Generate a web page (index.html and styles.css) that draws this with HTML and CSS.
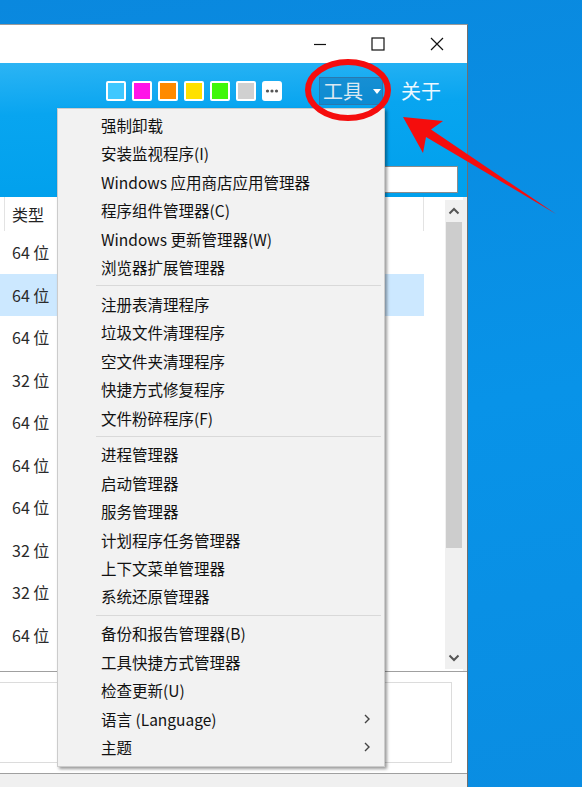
FILE: index.html
```html
<!DOCTYPE html>
<html lang="zh-CN">
<head>
    <meta charset="UTF-8">
    <title>工具菜单</title>
    <link rel="stylesheet" href="styles.css">
</head>
<body>
    <div class="window">
        <!-- 标题栏 -->
        <div class="titlebar">
            <div class="tbtn">
                <svg width="14" height="14" viewBox="0 0 14 14"><line x1="1" y1="7.5" x2="13" y2="7.5" stroke="#111" stroke-width="1.2"/></svg>
            </div>
            <div class="tbtn">
                <svg width="14" height="14" viewBox="0 0 14 14"><rect x="1" y="1" width="12" height="12" fill="none" stroke="#111" stroke-width="1.2"/></svg>
            </div>
            <div class="tbtn close">
                <svg width="14" height="14" viewBox="0 0 14 14"><path d="M1 1 L13 13 M13 1 L1 13" stroke="#111" stroke-width="1.2"/></svg>
            </div>
        </div>

        <!-- 蓝色头部 -->
        <div class="header">
            <div class="toolbar">
                <div class="swatches">
                    <span class="sw sw-blue"></span>
                    <span class="sw sw-pink"></span>
                    <span class="sw sw-orange"></span>
                    <span class="sw sw-yellow"></span>
                    <span class="sw sw-green"></span>
                    <span class="sw sw-gray"></span>
                    <span class="sw sw-more">
                        <svg width="16" height="16" viewBox="0 0 16 16">
                            <circle cx="3.5" cy="8" r="1.6" fill="#555"/>
                            <circle cx="8" cy="8" r="1.6" fill="#555"/>
                            <circle cx="12.5" cy="8" r="1.6" fill="#555"/>
                        </svg>
                    </span>
                </div>
                <div class="tool-btn">工具 <span class="caret"></span></div>
                <div class="about">关于</div>
            </div>
            <div class="search"></div>
        </div>

        <!-- 列表 -->
        <div class="list">
            <div class="table">
                <div class="thead"><span class="th">类型</span></div>
                <div class="row">64 位</div>
                <div class="row selected">64 位</div>
                <div class="row">64 位</div>
                <div class="row">32 位</div>
                <div class="row">64 位</div>
                <div class="row">64 位</div>
                <div class="row">64 位</div>
                <div class="row">32 位</div>
                <div class="row">32 位</div>
                <div class="row">64 位</div>
            </div>
            <div class="scrollbar">
                <div class="sb-arrow">
                    <svg width="12" height="8" viewBox="0 0 12 8"><polyline points="1.5,6.5 6,2 10.5,6.5" fill="none" stroke="#555" stroke-width="2"/></svg>
                </div>
                <div class="sb-thumb"></div>
                <div class="sb-track"></div>
                <div class="sb-arrow">
                    <svg width="12" height="8" viewBox="0 0 12 8"><polyline points="1.5,1.5 6,6 10.5,1.5" fill="none" stroke="#555" stroke-width="2"/></svg>
                </div>
            </div>
        </div>

        <!-- 详情 -->
        <div class="lower">
            <div class="details"></div>
        </div>
        <div class="status"></div>
    </div>

    <!-- 下拉菜单 -->
    <div class="menu">
        <div class="item">强制卸载</div>
        <div class="item">安装监视程序(I)</div>
        <div class="item">Windows 应用商店应用管理器</div>
        <div class="item">程序组件管理器(C)</div>
        <div class="item">Windows 更新管理器(W)</div>
        <div class="item">浏览器扩展管理器</div>
        <div class="sep"></div>
        <div class="item">注册表清理程序</div>
        <div class="item">垃圾文件清理程序</div>
        <div class="item">空文件夹清理程序</div>
        <div class="item">快捷方式修复程序</div>
        <div class="item">文件粉碎程序(F)</div>
        <div class="sep"></div>
        <div class="item">进程管理器</div>
        <div class="item">启动管理器</div>
        <div class="item">服务管理器</div>
        <div class="item">计划程序任务管理器</div>
        <div class="item">上下文菜单管理器</div>
        <div class="item">系统还原管理器</div>
        <div class="sep"></div>
        <div class="item">备份和报告管理器(B)</div>
        <div class="item">工具快捷方式管理器</div>
        <div class="item">检查更新(U)</div>
        <div class="item sub">语言 (Language)
            <svg width="6" height="10" viewBox="0 0 6 10"><polyline points="1,1 5,5 1,9" fill="none" stroke="#444" stroke-width="1.4"/></svg>
        </div>
        <div class="item sub">主题
            <svg width="6" height="10" viewBox="0 0 6 10"><polyline points="1,1 5,5 1,9" fill="none" stroke="#444" stroke-width="1.4"/></svg>
        </div>
    </div>

    <!-- 红色标注 -->
    <svg class="marks" width="582" height="787" viewBox="0 0 582 787">
        <ellipse cx="348" cy="90" rx="40" ry="28" fill="none" stroke="#f50d0d" stroke-width="6"/>
        <polygon points="403,117 443,121 431,129.5 556,214 426,137 423,153" fill="#f50d0d"/>
    </svg>
</body>
</html>
```

FILE: styles.css
```css
body {
    margin: 0;
    width: 582px;
    height: 787px;
    overflow: hidden;
    position: relative;
    font-family: "Noto Sans CJK SC", "Noto Sans", sans-serif;
    background: linear-gradient(170deg, #0a88de 0%, #0893e8 55%, #0a8de2 100%);
}
.window {
    width: 467px;
    height: 762px;
    margin-top: 24px;
    border-top: 1px solid #9a9a9a;
    border-right: 1px solid #707070;
    background: #fff;
    display: flex;
    flex-direction: column;
}
/* 标题栏 */
.titlebar {
    height: 38px;
    display: flex;
    justify-content: flex-end;
    align-items: center;
    background: #fff;
}
.tbtn {
    width: 58px;
    height: 38px;
    display: flex;
    align-items: center;
    justify-content: center;
}
.tbtn.close {
    width: 60px;
}
/* 头部 */
.header {
    height: 134px;
    display: flex;
    flex-direction: column;
    background: linear-gradient(178deg, #2cb4f4 0%, #08a5f0 35%, #00a0ec 100%);
}
.toolbar {
    display: flex;
    align-items: center;
    justify-content: flex-end;
    margin-top: 14px;
    padding-right: 26px;
    color: #fff;
}
.swatches {
    display: flex;
    gap: 6px;
    margin-right: 37px;
}
.sw {
    width: 16px;
    height: 16px;
    border: 2px solid #fff;
    border-radius: 2px;
    box-sizing: content-box;
}
.sw-blue { background: #3fc8ff; }
.sw-pink { background: #ff14e8; }
.sw-orange { background: #ff8a00; }
.sw-yellow { background: #ffe100; }
.sw-green { background: #3ff70a; }
.sw-gray { background: #d0d0d0; }
.sw-more {
    background: #fff;
    border-radius: 3px;
    display: flex;
}
.tool-btn {
    width: 64px;
    height: 28px;
    border: 1px solid #2a78ae;
    background: rgba(20, 100, 165, 0.4);
    font-size: 20px;
    line-height: 28px;
    padding-left: 3px;
    box-sizing: border-box;
    display: flex;
    align-items: center;
    gap: 10px;
    margin-right: 18px;
    color: #dce9f2;
}
.caret {
    width: 0;
    height: 0;
    border-left: 4px solid transparent;
    border-right: 4px solid transparent;
    border-top: 5px solid #fff;
}
.about {
    font-size: 20px;
    line-height: 28px;
    color: #eef8ff;
}
.search {
    margin-top: auto;
    margin-bottom: 4px;
    margin-left: 200px;
    margin-right: 9px;
    height: 25px;
    background: #fff;
    border: 1px solid #8c8c8c;
}
/* 列表 */
.list {
    height: 474px;
    display: flex;
    border-bottom: 1px solid #a0a0a0;
    padding-right: 4px;
    background: linear-gradient(to left, #f0f0f0 4px, #fff 4px);
}
.table {
    flex: 1;
}
.thead {
    height: 34px;
    width: 420px;
    margin-left: 4px;
    display: flex;
    align-items: center;
    box-sizing: border-box;
    border-left: 1px solid #e3e3e3;
    border-right: 1px solid #e3e3e3;
}
.th {
    font-size: 16px;
    color: #222;
    padding-left: 7px;
}
.row {
    width: 424px;
    height: 42.55px;
    line-height: 42.55px;
    padding-left: 12px;
    box-sizing: border-box;
    font-size: 16px;
    color: #2a2a2a;
}
.row.selected {
    background: #cce8ff;
}
.scrollbar {
    width: 18px;
    margin-top: 3px;
    margin-bottom: 2px;
    background: #f0f0f0;
    display: flex;
    flex-direction: column;
}
.sb-arrow {
    height: 22px;
    display: flex;
    align-items: center;
    justify-content: center;
}
.sb-thumb {
    height: 326px;
    margin: 0 1px;
    background: #cdcdcd;
}
.sb-track {
    flex: 1;
}
/* 详情 */
.lower {
    height: 102px;
    box-sizing: border-box;
    padding: 10px 15px 10px 0;
    border-bottom: 1px solid #a0a0a0;
    background: #fff;
}
.details {
    height: 100%;
    box-sizing: border-box;
    border: 1px solid #dcdcdc;
    border-left: none;
}
.status {
    flex: 1;
    background: #f0f0f0;
}
/* 菜单 */
.menu {
    position: absolute;
    left: 57px;
    top: 108px;
    width: 328px;
    height: 659px;
    box-sizing: border-box;
    padding: 2px 0 3px;
    background: #f2f2f2;
    border: 1px solid #cccccc;
    box-shadow: 2px 2px 3px rgba(0, 0, 0, 0.4);
}
.item {
    height: 28.4px;
    line-height: 28.4px;
    padding-left: 43px;
    font-size: 15.5px;
    color: #111;
    white-space: nowrap;
}
.item.sub {
    display: flex;
    align-items: center;
    justify-content: space-between;
    padding-right: 14px;
}
.sep {
    height: 8.6px;
    display: flex;
    align-items: center;
    margin: 0 3px 0 38px;
}
.sep::before {
    content: "";
    flex: 1;
    height: 1px;
    background: #d9d9d9;
}
/* 标注 */
.marks {
    position: absolute;
    left: 0;
    top: 0;
    pointer-events: none;
}
```
